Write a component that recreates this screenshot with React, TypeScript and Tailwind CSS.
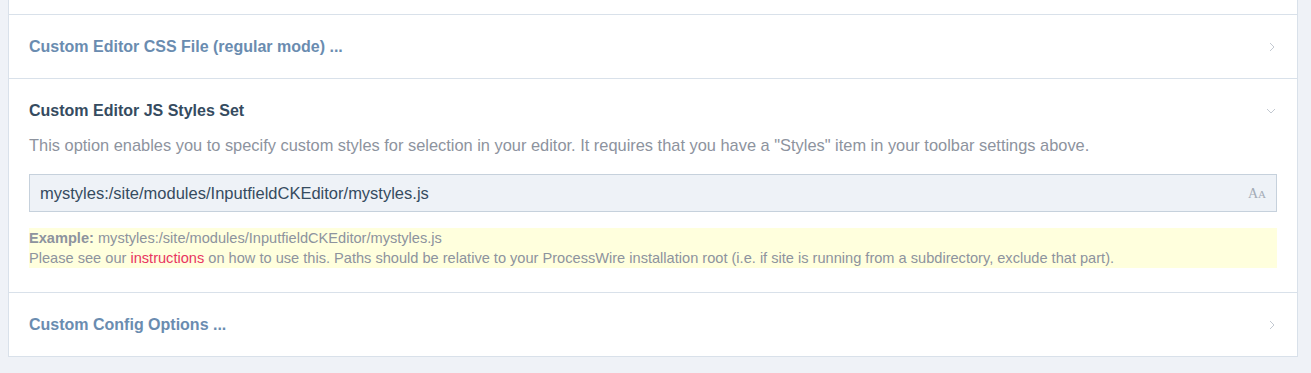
const sans = { fontFamily: '"Liberation Sans", Arial, sans-serif' };

function ChevronRight() {
  return (
    <svg width="6" height="10" viewBox="0 0 6 10" fill="none">
      <path d="M1 1l4 4-4 4" stroke="#c3c9d1" strokeWidth="1" />
    </svg>
  );
}

function ChevronDown() {
  return (
    <svg width="10" height="6" viewBox="0 0 10 6" fill="none">
      <path d="M1 1l4 4 4-4" stroke="#c3c9d1" strokeWidth="1" />
    </svg>
  );
}

function CollapsedRow({ label }: { label: string }) {
  return (
    <div className="h-[64px] flex items-center justify-between pl-[20px] pr-[22px] border-b border-[#d9e1ea]">
      <span className="text-[16px] font-bold text-[#6a8cb0]">{label}</span>
      <ChevronRight />
    </div>
  );
}

export default function App() {
  return (
    <div className="w-[1311px] h-[373px] bg-[#eff2f7] pl-[8px] pr-[13px]" style={sans}>
      <div className="bg-white border-x border-[#d9e1ea]">
        <div className="h-[15px] border-b border-[#d9e1ea]" />
        <CollapsedRow label="Custom Editor CSS File (regular mode) ..." />

        <div className="pl-[20px] pr-[20px] pt-[22px] pb-[24px] border-b border-[#d9e1ea]">
          <div className="flex items-center justify-between pr-[1px]">
            <span className="text-[16px] leading-[20px] font-bold text-[#354b60]">
              Custom Editor JS Styles Set
            </span>
            <ChevronDown />
          </div>
          <p className="mt-[12px] text-[16.4px] leading-[24px] text-[#8d939e]">
            This option enables you to specify custom styles for selection in your editor. It requires that you have a "Styles" item in your toolbar settings above.
          </p>
          <div className="mt-[17px] h-[38px] flex items-center justify-between bg-[#eef2f7] border border-[#c6d1dc] pl-[10px] pr-[10px]">
            <span className="text-[16.5px] text-[#354b60]">mystyles:/site/modules/InputfieldCKEditor/mystyles.js</span>
            <span className="text-[14px] text-[#a3abb6]" style={{ fontFamily: '"Liberation Serif", serif' }}>
              A<span className="text-[11px]">A</span>
            </span>
          </div>
          <div className="mt-[16px] bg-[#ffffdd] text-[14.6px] leading-[20px] text-[#8d939e]">
            <div>
              <span className="font-bold">Example:</span> mystyles:/site/modules/InputfieldCKEditor/mystyles.js
            </div>
            <div>
              Please see our <span className="text-[#e83561]">instructions</span> on how to use this. Paths should be relative to your ProcessWire installation root (i.e. if site is running from a subdirectory, exclude that part).
            </div>
          </div>
        </div>

        <CollapsedRow label="Custom Config Options ..." />
      </div>
    </div>
  );
}
